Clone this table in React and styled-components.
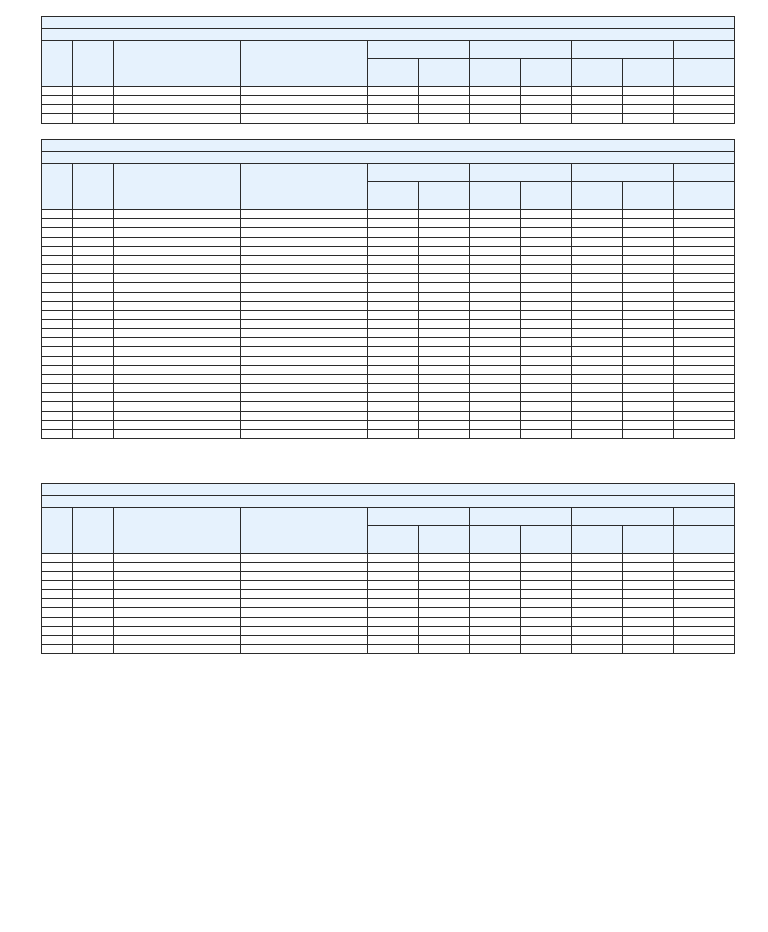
import styled, { createGlobalStyle } from 'styled-components';

const GlobalStyle = createGlobalStyle`
  html, body {
    margin: 0;
    padding: 0;
    background: #ffffff;
    font-family: "Liberation Sans", Arial, sans-serif;
  }
`;

const Page = styled.div`
  width: 768px;
  padding: 16px 0 0 41px;
  box-sizing: border-box;
  display: flex;
  flex-direction: column;
`;

const Sheet = styled.table`
  width: 693px;
  table-layout: fixed;
  border-collapse: collapse;
  margin-bottom: ${(p) => p.gap}px;
  font-size: 6px;
`;

const TitleRow = styled.tr`
  height: 12px;
`;

const HeadRow = styled.tr`
  height: ${(p) => p.h}px;
`;

const DataRow = styled.tr`
  height: 9.17px;
`;

const Cell = styled.td`
  border: 1px solid #2b2b2b;
  padding: 0;
  background: ${(p) => (p.head ? '#e6f2fd' : '#ffffff')};
`;

const widths = [31, 41, 127, 127, 51, 51, 51, 51, 51, 51, 61];

const Table = ({ rows, gap }) => (
  <Sheet gap={gap}>
    <colgroup>
      {widths.map((w, i) => (
        <col key={i} style={{ width: w }} />
      ))}
    </colgroup>
    <tbody>
      <TitleRow>
        <Cell head colSpan={11} />
      </TitleRow>
      <TitleRow>
        <Cell head colSpan={11} />
      </TitleRow>
      <HeadRow h={18}>
        <Cell head rowSpan={2} />
        <Cell head rowSpan={2} />
        <Cell head rowSpan={2} />
        <Cell head rowSpan={2} />
        <Cell head colSpan={2} />
        <Cell head colSpan={2} />
        <Cell head colSpan={2} />
        <Cell head />
      </HeadRow>
      <HeadRow h={28}>
        {[0, 1, 2, 3, 4, 5, 6].map((i) => (
          <Cell head key={i} />
        ))}
      </HeadRow>
      {Array.from({ length: rows }).map((_, r) => (
        <DataRow key={r}>
          {widths.map((_, c) => (
            <Cell key={c} />
          ))}
        </DataRow>
      ))}
    </tbody>
  </Sheet>
);

const App = () => (
  <>
    <GlobalStyle />
    <Page>
      <Table rows={4} gap={15.5} />
      <Table rows={25} gap={43.5} />
      <Table rows={11} gap={0} />
    </Page>
  </>
);

export default App;
